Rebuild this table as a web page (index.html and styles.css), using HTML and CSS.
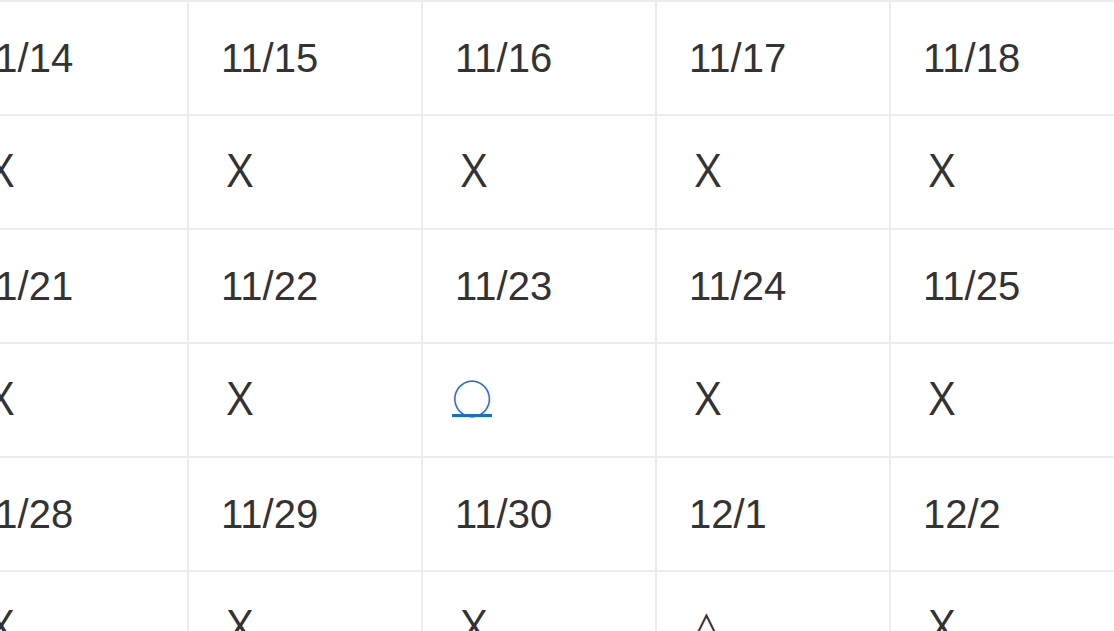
FILE: index.html
```html
<!DOCTYPE html>
<html lang="ja">
<head>
<meta charset="utf-8">
<title>Calendar</title>
<link rel="stylesheet" href="styles.css">
</head>
<body>
<div class="viewport">
  <div class="calendar">
    <div class="cell date lead">11/14</div>
    <div class="cell date">11/15</div>
    <div class="cell date">11/16</div>
    <div class="cell date">11/17</div>
    <div class="cell date">11/18</div>

    <div class="cell mark lead">X</div>
    <div class="cell mark">X</div>
    <div class="cell mark">X</div>
    <div class="cell mark">X</div>
    <div class="cell mark">X</div>

    <div class="cell date lead">11/21</div>
    <div class="cell date">11/22</div>
    <div class="cell date">11/23</div>
    <div class="cell date">11/24</div>
    <div class="cell date">11/25</div>

    <div class="cell mark lead">X</div>
    <div class="cell mark">X</div>
    <div class="cell mark"><a class="avail" href="#">○</a></div>
    <div class="cell mark">X</div>
    <div class="cell mark">X</div>

    <div class="cell date lead">11/28</div>
    <div class="cell date">11/29</div>
    <div class="cell date">11/30</div>
    <div class="cell date">12/1</div>
    <div class="cell date">12/2</div>

    <div class="cell mark lead">X</div>
    <div class="cell mark">X</div>
    <div class="cell mark">X</div>
    <div class="cell mark"><span class="few">△</span></div>
    <div class="cell mark">X</div>
  </div>
</div>
</body>
</html>
```
FILE: styles.css
```css
html, body {
  margin: 0;
  padding: 0;
  background: #ffffff;
}

.viewport {
  width: 1114px;
  height: 631px;
  overflow: hidden;
}

.calendar {
  display: grid;
  grid-template-columns: 239px repeat(4, 234px);
  grid-auto-rows: 114px;
  margin-left: -52px;
  font-family: "Liberation Sans", Arial, sans-serif;
  font-size: 40px;
  color: #333333;
}

.cell {
  box-sizing: border-box;
  border-top: 2px solid #ececec;
  border-left: 2px solid #ececec;
  display: flex;
  align-items: center;
  padding-left: 32px;
}

.date.lead {
  padding-left: 26px;
}

.mark {
  padding-left: 38px;
  padding-bottom: 6px;
  font-family: "Open Sans", sans-serif;
  font-size: 45px;
}

.avail {
  margin-left: -9px;
  color: #1a6ec6;
  font-family: "Noto Sans CJK JP", sans-serif;
  font-size: 40px;
  line-height: 1;
  text-decoration: underline;
  text-decoration-thickness: 3px;
  text-underline-offset: 0px;
}

.few {
  font-family: "DejaVu Sans", sans-serif;
  font-size: 40px;
  margin-left: -4px;
}
```
